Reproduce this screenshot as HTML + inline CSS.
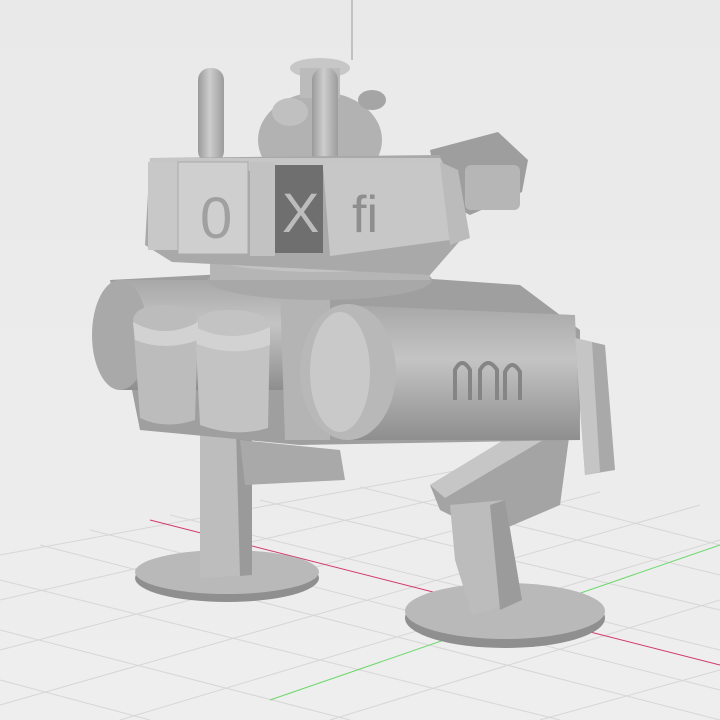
<!DOCTYPE html>
<html><head><meta charset="utf-8"><style>
html,body{margin:0;padding:0;width:720px;height:720px;overflow:hidden;background:#ebebeb}
svg{display:block}
</style></head><body>
<svg width="720" height="720" viewBox="0 0 720 720" xmlns="http://www.w3.org/2000/svg">
<defs>
<linearGradient id="bg" x1="0" y1="0" x2="0" y2="1"><stop offset="0" stop-color="#e9e9e9"/><stop offset="1" stop-color="#eeeeee"/></linearGradient>
<linearGradient id="cyl" x1="0" y1="0" x2="0" y2="1"><stop offset="0" stop-color="#a8a8a8"/><stop offset="0.4" stop-color="#c4c4c4"/><stop offset="1" stop-color="#8e8e8e"/></linearGradient>
<linearGradient id="cylv" x1="0" y1="0" x2="1" y2="0"><stop offset="0" stop-color="#9a9a9a"/><stop offset="0.45" stop-color="#cdcdcd"/><stop offset="1" stop-color="#9c9c9c"/></linearGradient>
</defs>
<rect width="720" height="720" fill="url(#bg)"/>
<!-- vertical line -->
<line x1="352" y1="0" x2="352" y2="60" stroke="#999" stroke-width="1"/>
<!-- floor grid -->
<g stroke="#d6d6d6" stroke-width="1" fill="none">
<path d="M0,555 L460,470 M0,600 L520,480 M0,650 L600,492 M0,705 L700,505 M120,720 L720,540 M330,720 L720,600 M540,720 L720,670"/>
<path d="M40,545 L720,720 M90,530 L720,690 M170,515 L720,650 M260,500 L720,610 M360,487 L720,575 M450,476 L720,545 M0,580 L560,720 M0,630 L350,720 M0,680 L150,720"/>
</g>
<line x1="150" y1="520" x2="720" y2="665" stroke="#d23a6a" stroke-width="1"/>
<line x1="270" y1="700" x2="720" y2="545" stroke="#6ad86a" stroke-width="1"/>

<!-- left base -->
<ellipse cx="227" cy="578" rx="92" ry="24" fill="#8f8f8f"/>
<ellipse cx="227" cy="572" rx="92" ry="22" fill="#b9b9b9"/>
<!-- right base -->
<ellipse cx="505" cy="618" rx="100" ry="30" fill="#8f8f8f"/>
<ellipse cx="505" cy="611" rx="100" ry="28" fill="#b9b9b9"/>

<!-- left leg -->
<polygon points="200,430 250,430 252,575 200,578" fill="#bdbdbd"/>
<polygon points="236,430 252,432 252,575 240,576" fill="#9a9a9a"/>
<polygon points="240,440 340,450 345,480 245,485" fill="#a9a9a9"/>
<!-- right leg upper -->
<polygon points="430,485 545,415 570,430 560,505 490,535 440,510" fill="#a4a4a4"/>
<polygon points="430,485 545,415 560,430 445,498" fill="#c6c6c6"/>
<!-- right leg lower -->
<polygon points="450,505 505,500 522,600 472,615 455,560" fill="#bcbcbc"/>
<polygon points="505,500 522,600 500,610 490,505" fill="#9b9b9b"/>

<!-- body back -->
<polygon points="110,280 300,270 520,285 580,330 580,440 300,445 140,430" fill="#9f9f9f"/>
<!-- left cylinder -->
<rect x="120" y="280" width="175" height="110" fill="url(#cyl)"/>
<ellipse cx="120" cy="335" rx="28" ry="55" fill="#a9a9a9"/>
<!-- left fists -->
<path d="M133,320 Q135,305 165,305 Q195,305 198,320 L195,420 Q165,430 140,418 Z" fill="#bcbcbc"/>
<path d="M195,325 Q198,310 230,310 Q265,310 270,325 L268,428 Q235,438 200,425 Z" fill="#c3c3c3"/>
<path d="M133,322 Q165,340 198,322 L198,340 Q165,352 135,340 Z" fill="#d2d2d2"/>
<path d="M195,327 Q232,345 270,327 L270,345 Q232,358 197,344 Z" fill="#d2d2d2"/>
<!-- central body block -->
<polygon points="280,290 330,295 330,440 285,440" fill="#b4b4b4"/>
<!-- right arm -->
<polygon points="340,305 575,315 580,440 350,440" fill="url(#cyl)"/>
<ellipse cx="348" cy="372" rx="48" ry="68" fill="#b8b8b8"/>
<ellipse cx="340" cy="372" rx="30" ry="60" fill="#c9c9c9"/>
<path d="M455,400 L455,370 Q462,356 470,370 L470,400 M480,400 L480,370 Q488,356 497,370 L497,400 M505,400 L505,372 Q512,358 520,372 L520,400" stroke="#858585" stroke-width="4" fill="none"/>
<polygon points="575,338 605,345 615,470 585,475" fill="#a9a9a9"/>
<polygon points="575,338 592,342 600,472 585,475" fill="#c5c5c5"/>

<!-- neck -->
<ellipse cx="320" cy="280" rx="112" ry="20" fill="#a8a8a8"/>
<rect x="210" y="255" width="220" height="25" fill="#b5b5b5"/>
<ellipse cx="320" cy="256" rx="110" ry="16" fill="#c2c2c2"/>

<!-- back gun -->
<polygon points="430,150 498,132 528,160 522,192 470,215 440,200" fill="#9e9e9e"/>
<rect x="465" y="165" width="55" height="45" rx="6" fill="#b6b6b6"/>
<!-- dome -->
<ellipse cx="320" cy="140" rx="62" ry="48" fill="#b2b2b2"/>
<ellipse cx="290" cy="112" rx="18" ry="14" fill="#c0c0c0"/>
<ellipse cx="372" cy="100" rx="14" ry="10" fill="#a5a5a5"/>
<ellipse cx="320" cy="68" rx="30" ry="10" fill="#c7c7c7"/>
<rect x="300" y="68" width="40" height="30" fill="#bbb"/>
<!-- antennas -->
<rect x="198" y="68" width="26" height="95" rx="12" fill="url(#cylv)"/>
<rect x="312" y="68" width="26" height="100" rx="12" fill="url(#cylv)"/>

<!-- head box -->
<polygon points="150,158 440,155 465,235 430,275 172,262 145,245" fill="#a9a9a9"/>
<polygon points="150,158 440,158 448,172 150,170" fill="#c6c6c6"/>
<rect x="148" y="162" width="30" height="88" fill="#c8c8c8"/>
<rect x="178" y="162" width="70" height="92" fill="#cfcfcf" stroke="#aaa"/>
<rect x="250" y="162" width="25" height="94" fill="#c2c2c2"/>
<rect x="275" y="165" width="48" height="88" fill="#6f6f6f"/>
<text x="200" y="238" font-family="Liberation Sans, sans-serif" font-size="58" fill="#a0a0a0">0</text>
<text x="282" y="232" font-family="Liberation Sans, sans-serif" font-size="56" fill="#bcbcbc">X</text>
<polygon points="323,165 440,162 450,240 330,256" fill="#c7c7c7"/>
<text x="352" y="232" font-family="Liberation Sans, sans-serif" font-size="52" fill="#8e8e8e">fi</text>
<polygon points="440,162 458,170 470,238 450,245" fill="#bbbbbb"/>
</svg>
</body></html>
